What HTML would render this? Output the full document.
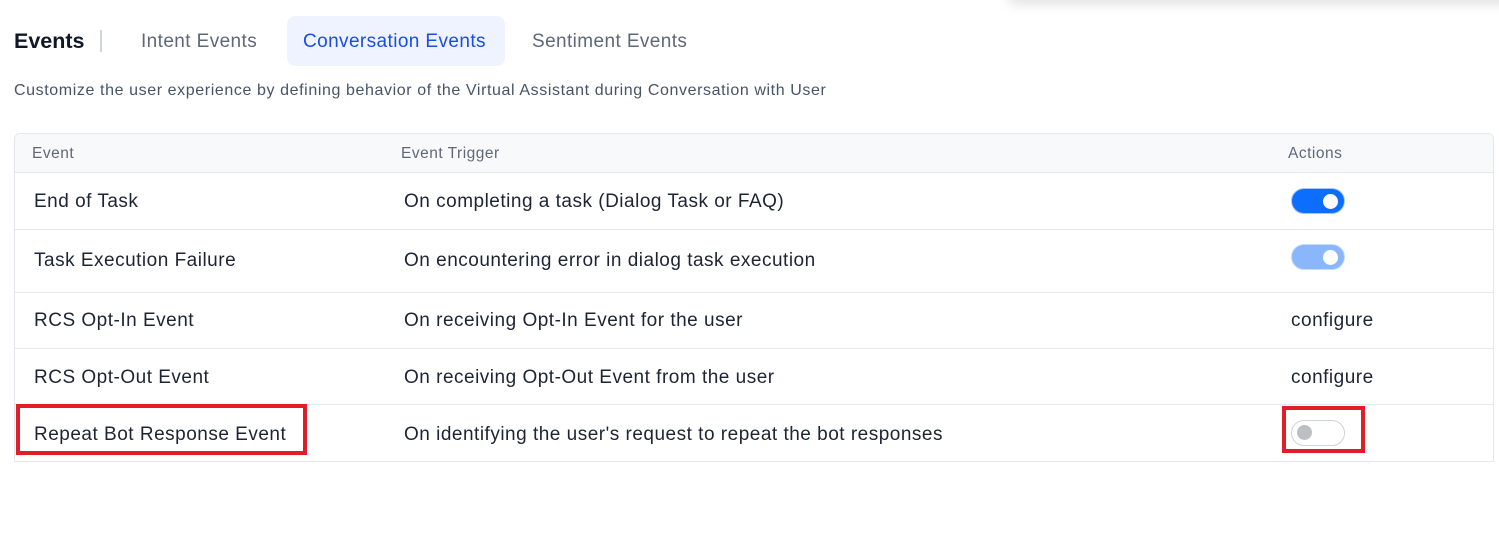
<!DOCTYPE html>
<html><head><style>
body{margin:0;width:1499px;height:555px;background:#fff;font-family:"Liberation Sans",sans-serif;position:relative;overflow:hidden}
.a{position:absolute;white-space:nowrap}
.shadow{position:absolute;left:1010px;top:-20px;width:520px;height:20px;box-shadow:0 4px 12px rgba(0,0,0,.12);background:#fff}
.tbl{position:absolute;left:14px;top:133px;width:1478px;height:327px;border:1px solid #e4e7ec;border-radius:6px 6px 0 0}
.hd{position:absolute;left:0;top:0;width:100%;height:38px;background:#f8f9fb;border-bottom:1px solid #e4e7ec;border-radius:6px 6px 0 0}
.ln{position:absolute;left:0;width:100%;height:1px;background:#e4e7ec}
.h{font-size:15.5px;letter-spacing:0.5px;color:#5f6878;top:11px}
.c{font-size:19px;letter-spacing:0.5px;color:#1d2433}
.tg{position:absolute;left:1276px;width:52px;height:24px;border-radius:13px}
.tg::after{content:"";position:absolute;top:5px;width:15px;height:15px;border-radius:50%}
.on{background:#0d6efd;border:1px solid #a8c7fa}
.on::after{right:6px;background:#fff}
.dim{background:#8ab7fb;border:1px solid #c6dcfd}
.dim::after{right:6px;background:#fff}
.off{background:#fff;border:1px solid #cfd3da}
.off::after{left:5px;top:4px;background:#bcc0c6}
.red{position:absolute;border:4px solid #e11d2a}
.t{font-size:19px;letter-spacing:0.4px}
</style></head><body>
<div class="shadow"></div>
<div class="a" style="left:14px;top:29px;font-size:21.5px;font-weight:bold;color:#101828">Events</div>
<div class="a" style="left:100px;top:30px;width:2px;height:22px;background:#d0d5dd"></div>
<div class="a t" style="left:141px;top:31px;color:#5f6878">Intent Events</div>
<div class="a" style="left:287px;top:16px;width:218px;height:50px;background:#eef3ff;border-radius:8px"></div>
<div class="a t" style="left:303px;top:31px;color:#1b4de4">Conversation Events</div>
<div class="a t" style="left:532px;top:31px;color:#5f6878">Sentiment Events</div>
<div class="a" style="left:14px;top:82px;font-size:16px;letter-spacing:0.6px;color:#475467">Customize the user experience by defining behavior of the Virtual Assistant during Conversation with User</div>
<div class="tbl">
<div class="hd"></div>
<div class="a h" style="left:17px">Event</div>
<div class="a h" style="left:386px">Event Trigger</div>
<div class="a h" style="left:1273px">Actions</div>
<div class="ln" style="top:95px"></div>
<div class="ln" style="top:158px"></div>
<div class="ln" style="top:214px"></div>
<div class="ln" style="top:270px"></div>
<div class="a c" style="left:19px;top:57px">End of Task</div>
<div class="a c" style="left:389px;top:57px">On completing a task (Dialog Task or FAQ)</div>
<div class="tg on" style="top:54px"></div>
<div class="a c" style="left:19px;top:116px">Task Execution Failure</div>
<div class="a c" style="left:389px;top:116px">On encountering error in dialog task execution</div>
<div class="tg dim" style="top:110px"></div>
<div class="a c" style="left:19px;top:176px">RCS Opt-In Event</div>
<div class="a c" style="left:389px;top:176px">On receiving Opt-In Event for the user</div>
<div class="a c" style="left:1276px;top:176px">configure</div>
<div class="a c" style="left:19px;top:233px">RCS Opt-Out Event</div>
<div class="a c" style="left:389px;top:233px">On receiving Opt-Out Event from the user</div>
<div class="a c" style="left:1276px;top:233px">configure</div>
<div class="a c" style="left:19px;top:290px">Repeat Bot Response Event</div>
<div class="a c" style="left:389px;top:290px">On identifying the user's request to repeat the bot responses</div>
<div class="tg off" style="top:286px"></div>
</div>
<div class="red" style="left:16px;top:404px;width:283px;height:43px"></div>
<div class="red" style="left:1282px;top:406px;width:75px;height:39px"></div>
</body></html>
